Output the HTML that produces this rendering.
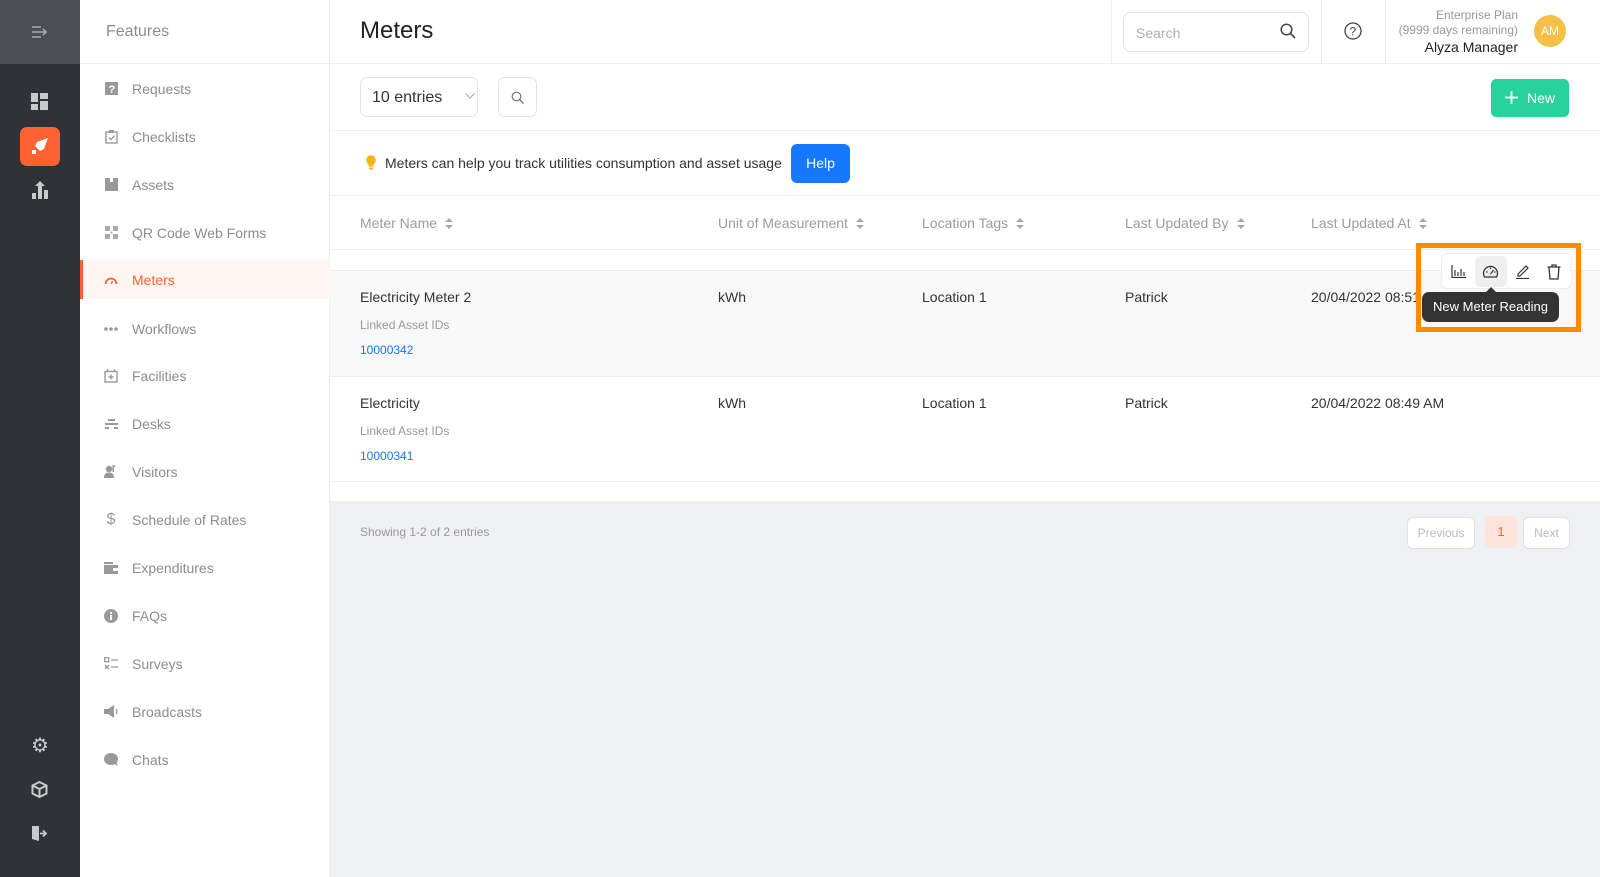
<!DOCTYPE html>
<html><head><meta charset="utf-8"><style>
*{margin:0;padding:0;box-sizing:border-box}
body{width:1600px;height:877px;overflow:hidden;font-family:"Liberation Sans",sans-serif;background:#eff0f4;position:relative;color:#333}
.a{position:absolute}
.side{left:0;top:0;width:80px;height:877px;background:#2f3338}
.sidetop{left:0;top:0;width:80px;height:64px;background:#4b4f55}
.feat{left:80px;top:0;width:250px;height:877px;background:#fff;border-right:1px solid #eee}
.mi{position:absolute;left:0;width:250px;height:39px;display:flex;align-items:center;font-size:14px;color:#8a8d93}
.mi .ic{width:14px;height:14px;margin-left:24px;margin-right:14px;display:flex;align-items:center;justify-content:center}
.main{left:330px;top:0;width:1270px;height:501px;background:#fff}
.hl{position:absolute;left:330px;width:1270px;height:1px;background:#eeeff2}
.th{position:absolute;top:215px;font-size:14px;color:#9a9ca2}
.td{position:absolute;font-size:14px;color:#333}
.sm{position:absolute;font-size:12px;color:#999}
.lk{position:absolute;font-size:12px;color:#1677ff}
.sort{display:inline-block;vertical-align:middle;margin-left:8px;width:8px;height:12px;position:relative}
.sort:before{content:"";position:absolute;left:0;top:0;border-left:4px solid transparent;border-right:4px solid transparent;border-bottom:4px solid #aaa}
.sort:after{content:"";position:absolute;left:0;top:7px;border-left:4px solid transparent;border-right:4px solid transparent;border-top:4px solid #aaa}
</style></head><body>
<div class="a side"></div><div class="a sidetop"></div>
<svg class="a" style="left:31px;top:25px" width="18" height="14" viewBox="0 0 18 14"><g stroke="#aaa" stroke-width="1.6"><path d="M1 2h9M1 7h13M1 12h9M12 4l3 3-3 3" fill="none"/></g></svg>
<svg class="a" style="left:31px;top:93px" width="17" height="17"><rect x="0" y="0" width="7" height="9" fill="#c8cacc"/><rect x="9" y="0" width="8" height="6" fill="#c8cacc"/><rect x="0" y="11" width="7" height="6" fill="#c8cacc"/><rect x="9" y="8" width="8" height="9" fill="#c8cacc"/></svg>
<div class="a" style="left:20px;top:127px;width:40px;height:39px;background:#fe6232;border-radius:7px"></div>
<svg class="a" style="left:31px;top:137px" width="18" height="18" viewBox="0 0 18 18"><path d="M17 1L6 5 4 9 9 14 13 12z" fill="#fff"/><rect x="1" y="13" width="4" height="4" fill="#fff"/></svg>
<svg class="a" style="left:32px;top:181px" width="16" height="18"><path d="M8 0l5 5H10v13H6V5H3z" fill="#c8cacc"/><rect x="0" y="12" width="4" height="6" fill="#c8cacc"/><rect x="12" y="9" width="4" height="9" fill="#c8cacc"/></svg>
<div class="a" style="left:31px;top:737px;color:#c8cacc;font-size:20px;line-height:18px">⚙</div>
<svg class="a" style="left:31px;top:781px" width="17" height="17" viewBox="0 0 17 17"><path d="M8.5 1L15.5 4.5V12.5L8.5 16 1.5 12.5V4.5z M1.5 4.5L8.5 8 15.5 4.5 M8.5 8V16" fill="none" stroke="#c8cacc" stroke-width="2"/></svg>
<svg class="a" style="left:32px;top:825px" width="17" height="17"><path d="M0 1h7v15l-7-2z" fill="#c8cacc"/><path d="M8 8.5h6M11 5.5l3 3-3 3" stroke="#c8cacc" stroke-width="1.8" fill="none"/></svg>

<div class="a feat"></div>
<div class="a" style="left:80px;top:63px;width:250px;height:1px;background:#eee"></div>
<div class="a" style="left:106px;top:23px;font-size:16px;color:#8a8d93">Features</div>
<div class="a" style="left:80px;top:0;width:250px">
<div class="mi" style="top:69px"><span class="ic"><svg width="13" height="13"><rect width="13" height="13" fill="#999"/><text x="3.5" y="11" font-size="11" fill="#fff" font-family="Liberation Sans" font-weight="bold">?</text></svg></span>Requests</div>
<div class="mi" style="top:117px"><span class="ic"><svg width="13" height="14"><rect x="1" y="2" width="11" height="11" fill="none" stroke="#999" stroke-width="1.4"/><path d="M4 7.5l2 2 3.5-4" stroke="#999" fill="none" stroke-width="1.3"/><rect x="4" y="0" width="5" height="3" fill="#999"/></svg></span>Checklists</div>
<div class="mi" style="top:165px"><span class="ic"><svg width="13" height="13"><rect width="13" height="13" fill="#999"/><rect x="5" y="0" width="3" height="4" fill="#fff"/></svg></span>Assets</div>
<div class="mi" style="top:213px"><span class="ic"><svg width="13" height="13" fill="#aaa"><rect width="5" height="5"/><rect x="8" width="5" height="5"/><rect y="8" width="5" height="5"/><rect x="8" y="8" width="5" height="5"/><rect x="5.5" y="5.5" width="2" height="2"/></svg></span>QR Code Web Forms</div>
<div class="a" style="left:0;top:260px;width:250px;height:39px;background:#fff6f2;border-left:3px solid #fe6232"></div>
<div class="mi" style="top:260px;color:#fe6232"><span class="ic"><svg width="14" height="10"><path d="M1.5 9A5.5 5.5 0 0 1 12.5 9" stroke="#fe6232" stroke-width="1.8" fill="none"/><path d="M7 9l1.5-3" stroke="#fe6232" stroke-width="1.3"/></svg></span>Meters</div>
<div class="mi" style="top:309px"><span class="ic"><svg width="14" height="4" fill="#999"><circle cx="2" cy="2" r="1.8"/><circle cx="7" cy="2" r="1.8"/><circle cx="12" cy="2" r="1.8"/></svg></span>Workflows</div>
<div class="mi" style="top:356px"><span class="ic"><svg width="14" height="14"><rect x="1" y="2.5" width="12" height="10.5" fill="none" stroke="#999" stroke-width="1.4"/><path d="M7 5.5v5M4.5 8h5M3.5 0v3M10.5 0v3" stroke="#999" stroke-width="1.4"/></svg></span>Facilities</div>
<div class="mi" style="top:404px"><span class="ic"><svg width="13" height="10" fill="#999"><rect x="3" y="0" width="7" height="2"/><rect x="0" y="4" width="13" height="2"/><rect x="0" y="8" width="4" height="2"/><rect x="9" y="8" width="4" height="2"/></svg></span>Desks</div>
<div class="mi" style="top:452px"><span class="ic"><svg width="14" height="13" fill="#999"><circle cx="5" cy="4" r="3.2"/><path d="M0 13c0-4 2-5.5 5-5.5s5 1.5 5 5.5z"/><path d="M10 0l2 2-2 0v5h-1.5V0z"/></svg></span>Visitors</div>
<div class="mi" style="top:500px"><span class="ic" style="font-size:16px;color:#999">$</span>Schedule of Rates</div>
<div class="mi" style="top:548px"><span class="ic"><svg width="14" height="12" fill="#999"><rect x="0" y="0" width="9" height="2"/><rect x="0" y="3" width="14" height="9"/><rect x="9" y="6" width="5" height="3" fill="#fff"/></svg></span>Expenditures</div>
<div class="mi" style="top:596px"><span class="ic"><svg width="14" height="14"><circle cx="7" cy="7" r="7" fill="#999"/><rect x="6" y="6" width="2" height="5" fill="#fff"/><rect x="6" y="3" width="2" height="2" fill="#fff"/></svg></span>FAQs</div>
<div class="mi" style="top:644px"><span class="ic"><svg width="14" height="13" stroke="#999" fill="none" stroke-width="1.3"><rect x="0.7" y="0.7" width="4" height="4"/><path d="M1 8l4 4M5 8l-4 4M7 3h7M7 10h7"/></svg></span>Surveys</div>
<div class="mi" style="top:692px"><span class="ic"><svg width="14" height="13" fill="#999"><path d="M0 4h4l6-4v13l-6-4H0z"/><path d="M12 4q2 2.5 0 5" stroke="#999" fill="none" stroke-width="1.3"/></svg></span>Broadcasts</div>
<div class="mi" style="top:740px"><span class="ic"><svg width="14" height="13" fill="#999"><ellipse cx="7" cy="6" rx="7" ry="6"/><path d="M9 10l5 3-2-5z"/></svg></span>Chats</div>
</div>

<div class="a main"></div>
<div class="a" style="left:330px;top:0;width:1270px;height:64px;background:#fff;border-bottom:1px solid #eee"></div>
<div class="a" style="left:360px;top:17px;font-size:24px;color:#222">Meters</div>
<div class="a" style="left:1111px;top:0;width:1px;height:63px;background:#eee"></div>
<div class="a" style="left:1321px;top:0;width:1px;height:63px;background:#eee"></div>
<div class="a" style="left:1385px;top:0;width:1px;height:63px;background:#eee"></div>
<div class="a" style="left:1123px;top:12px;width:186px;height:40px;border:1px solid #e2e2e2;border-radius:8px"></div>
<div class="a" style="left:1136px;top:25px;font-size:14px;color:#b0b0b0">Search</div>
<svg class="a" style="left:1280px;top:23px" width="16" height="16"><circle cx="6.5" cy="6.5" r="5.3" fill="none" stroke="#444" stroke-width="1.5"/><path d="M10.5 10.5l4.5 4.5" stroke="#444" stroke-width="1.6"/></svg>
<svg class="a" style="left:1344px;top:22px" width="18" height="18"><circle cx="9" cy="9" r="8" fill="none" stroke="#444" stroke-width="1.3"/><text x="5.5" y="13.5" font-size="12" fill="#444" font-family="Liberation Sans">?</text></svg>
<div class="a" style="right:82px;top:8px;font-size:12px;color:#999;text-align:right;line-height:15px">Enterprise Plan<br>(9999 days remaining)</div>
<div class="a" style="right:82px;top:39px;font-size:14px;color:#222">Alyza Manager</div>
<div class="a" style="left:1534px;top:15px;width:32px;height:32px;border-radius:50%;background:#f6c046;color:#fff;font-size:12px;text-align:center;line-height:32px">AM</div>

<div class="a" style="left:360px;top:77px;width:118px;height:40px;border:1px solid #e5e5e5;border-radius:7px"></div>
<div class="a" style="left:372px;top:89px;font-size:16px;color:#333">10 entries</div>
<svg class="a" style="left:465px;top:93px" width="10" height="6"><path d="M0.5 0.5l4.5 4.5 4.5-4.5" stroke="#aaa" fill="none"/></svg>
<div class="a" style="left:498px;top:77px;width:39px;height:40px;border:1px solid #e5e5e5;border-radius:7px"></div>
<svg class="a" style="left:511px;top:91px" width="13" height="13"><circle cx="5.5" cy="5.5" r="4.3" fill="none" stroke="#777" stroke-width="1.2"/><path d="M8.5 8.5l4 4" stroke="#777" stroke-width="1.3"/></svg>
<div class="a" style="left:1491px;top:79px;width:78px;height:38px;background:#28d39b;border-radius:5px;color:#fff;font-size:14px;line-height:38px;padding-left:36px">New</div>
<svg class="a" style="left:1505px;top:91px" width="13" height="13"><path d="M6.5 0v13M0 6.5h13" stroke="#fff" stroke-width="1.8"/></svg>
<div class="hl" style="top:130px"></div>
<svg class="a" style="left:366px;top:155px" width="10" height="15"><circle cx="5" cy="5" r="4.8" fill="#f8b41b"/><rect x="2.5" y="8" width="5" height="3.5" fill="#f8b41b"/><rect x="3" y="12.5" width="4" height="2" fill="#f8b41b"/></svg>
<div class="a" style="left:385px;top:155px;font-size:14px;color:#333">Meters can help you track utilities consumption and asset usage</div>
<div class="a" style="left:791px;top:144px;width:59px;height:39px;background:#1677ff;border-radius:6px;color:#fff;font-size:14px;text-align:center;line-height:39px">Help</div>
<div class="hl" style="top:195px"></div>
<div class="th" style="left:360px">Meter Name<span class="sort"></span></div>
<div class="th" style="left:718px">Unit of Measurement<span class="sort"></span></div>
<div class="th" style="left:922px">Location Tags<span class="sort"></span></div>
<div class="th" style="left:1125px">Last Updated By<span class="sort"></span></div>
<div class="th" style="left:1311px">Last Updated At<span class="sort"></span></div>
<div class="hl" style="top:249px"></div>
<div class="a" style="left:330px;top:270px;width:1270px;height:107px;background:#f8f8f8;border-top:1px solid #eee;border-bottom:1px solid #eee"></div>
<div class="td" style="left:360px;top:289px">Electricity Meter 2</div>
<div class="sm" style="left:360px;top:318px">Linked Asset IDs</div>
<div class="lk" style="left:360px;top:343px">10000342</div>
<div class="td" style="left:718px;top:289px">kWh</div>
<div class="td" style="left:922px;top:289px">Location 1</div>
<div class="td" style="left:1125px;top:289px">Patrick</div>
<div class="td" style="left:1311px;top:289px">20/04/2022 08:51 AM</div>
<div class="td" style="left:360px;top:395px">Electricity</div>
<div class="sm" style="left:360px;top:424px">Linked Asset IDs</div>
<div class="lk" style="left:360px;top:449px">10000341</div>
<div class="td" style="left:718px;top:395px">kWh</div>
<div class="td" style="left:922px;top:395px">Location 1</div>
<div class="td" style="left:1125px;top:395px">Patrick</div>
<div class="td" style="left:1311px;top:395px">20/04/2022 08:49 AM</div>
<div class="hl" style="top:481px"></div>

<div class="a" style="left:360px;top:525px;font-size:12px;color:#999">Showing 1-2 of 2 entries</div>
<div class="a" style="left:1407px;top:517px;width:68px;height:32px;background:#fff;border:1px solid #e2e2e2;border-radius:6px;font-size:12px;color:#bbb;text-align:center;line-height:30px">Previous</div>
<div class="a" style="left:1485px;top:516px;width:32px;height:32px;background:#fde3dc;border-radius:6px;font-size:13px;color:#fe6232;text-align:center;line-height:32px">1</div>
<div class="a" style="left:1523px;top:517px;width:47px;height:32px;background:#fff;border:1px solid #e2e2e2;border-radius:6px;font-size:12px;color:#bbb;text-align:center;line-height:30px">Next</div>

<div class="a" style="left:1441px;top:253px;width:131px;height:36px;background:#fff;border:1px solid #eee;border-radius:6px"></div>
<div class="a" style="left:1475px;top:256px;width:32px;height:31px;background:#efefef;border-radius:6px"></div>
<svg class="a" style="left:1451px;top:265px" width="15" height="13" stroke="#333" stroke-width="1.2" fill="none"><path d="M1 0v12.5h14M4 5v6M7 7v4M10 4v7M13 7v4"/></svg>
<svg class="a" style="left:1482px;top:264px" width="17" height="15" stroke="#333" stroke-width="1.2" fill="none"><path d="M2.5 13A7 7 0 1 1 14.5 13z"/><path d="M8.5 10l3-4M4 8h1.5M8.5 3.5v1.5M12 8h1.5"/></svg>
<svg class="a" style="left:1515px;top:264px" width="15" height="15" stroke="#333" stroke-width="1.2" fill="none"><path d="M3 10l8-8 2 2-8 8H3z"/><path d="M1 14.5h13"/></svg>
<svg class="a" style="left:1547px;top:264px" width="14" height="16" stroke="#333" stroke-width="1.3" fill="none"><path d="M0.5 3h13M5 3V1h4v2M2 3l1 12h8l1-12"/></svg>
<div class="a" style="left:1486px;top:287px;border-left:5px solid transparent;border-right:5px solid transparent;border-bottom:5px solid #333"></div>
<div class="a" style="left:1422px;top:292px;width:137px;height:30px;background:#333;border-radius:7px;color:#fff;font-size:13px;text-align:center;line-height:30px">New Meter Reading</div>
<div class="a" style="left:1416px;top:243px;width:165px;height:89px;border:5px solid #ff8c00"></div>
</body></html>
